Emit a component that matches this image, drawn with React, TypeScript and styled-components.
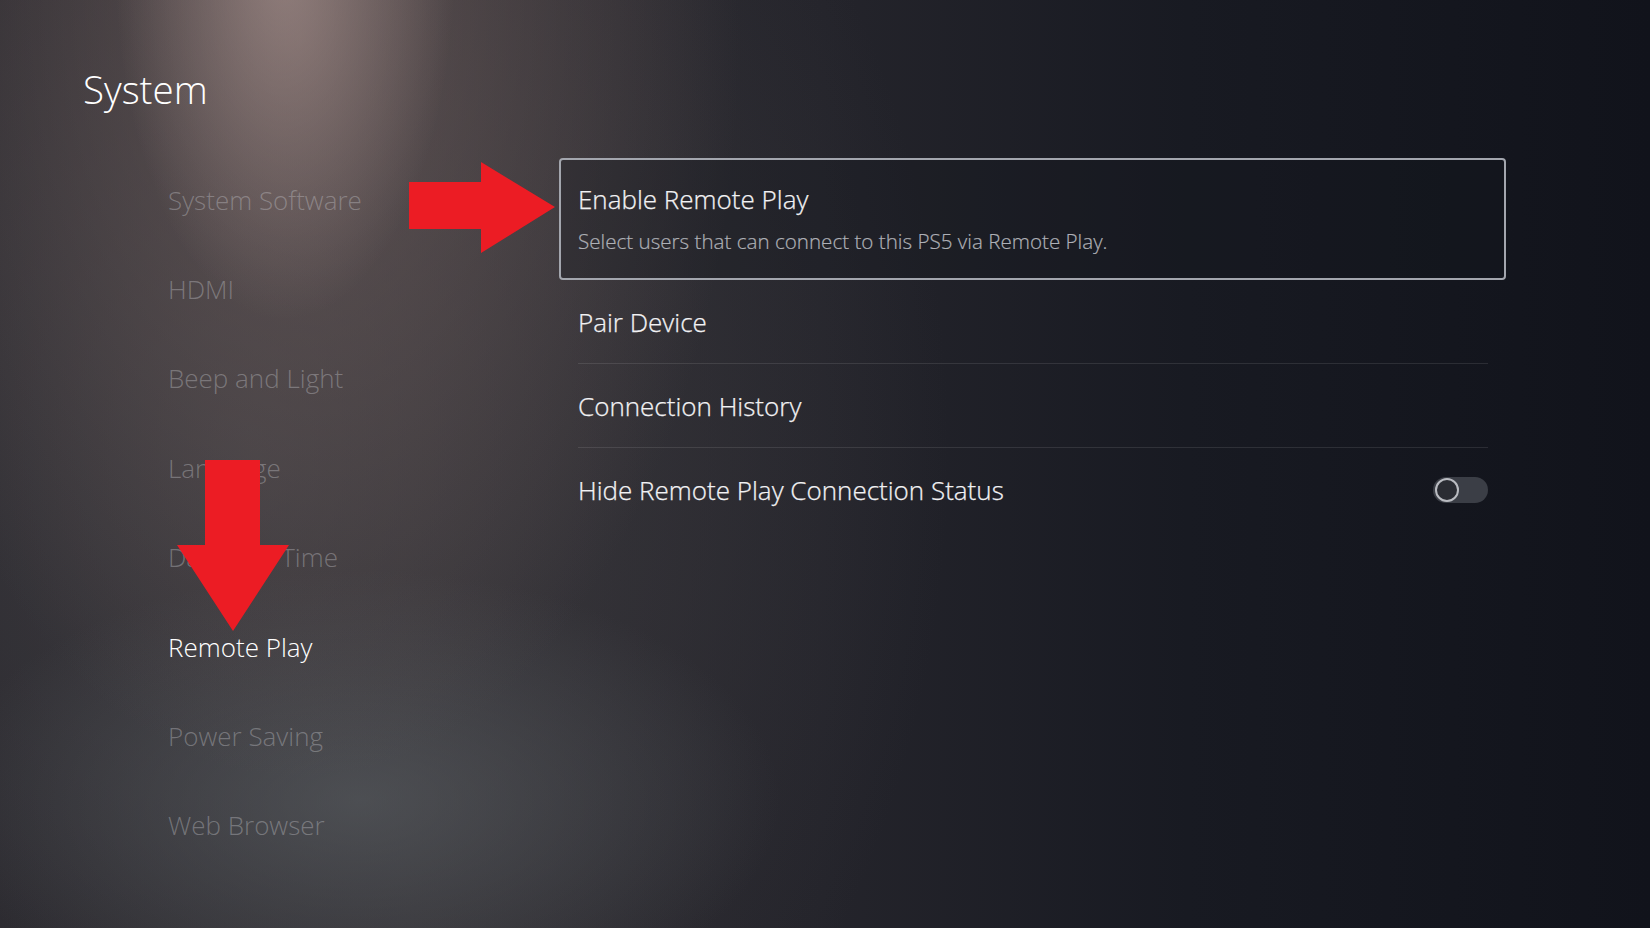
import React from "react";
import styled, { createGlobalStyle } from "styled-components";

const Global = createGlobalStyle`
  html, body { margin: 0; padding: 0; }
  body {
    width: 1650px;
    height: 928px;
    overflow: hidden;
    font-family: "Open Sans", "Noto Sans", sans-serif;
    background: #17181f;
  }
`;

const Page = styled.div`
  position: relative;
  width: 1650px;
  height: 928px;
  overflow: hidden;
  color: #f2f2f2;
  background:
    radial-gradient(ellipse 170px 360px at 285px -40px, rgba(190, 165, 160, 0.55), rgba(190, 165, 160, 0) 100%),
    radial-gradient(ellipse 440px 740px at 300px 40px, rgba(125, 105, 102, 0.55), rgba(125, 105, 102, 0) 100%),
    radial-gradient(ellipse 420px 230px at 360px 800px, rgba(95, 100, 104, 0.55), rgba(95, 100, 104, 0) 100%),
    radial-gradient(ellipse 700px 900px at 250px 450px, rgba(70, 68, 72, 0.7), rgba(70, 68, 72, 0) 100%),
    linear-gradient(90deg, #242329 0%, #2c2a2f 25%, #24242b 50%, #181a22 72%, #11131b 100%);
`;

const Header = styled.header`
  padding: 65px 0 0 83px;
  height: 48px;
`;

const Title = styled.h1`
  margin: 0;
  font-size: 38.5px;
  line-height: 48px;
  font-weight: 300;
  color: #ffffff;
`;

const Main = styled.main`
  display: flex;
  margin-top: 42px;
`;

const Sidebar = styled.nav`
  width: 391px;
  padding-left: 168px;
  display: flex;
  flex-direction: column;
`;

const MenuItem = styled.div<{ $active?: boolean }>`
  height: 89.4px;
  display: flex;
  align-items: center;
  font-size: 26px;
  font-weight: 300;
  color: ${(p) => (p.$active ? "#ffffff" : "rgba(200, 200, 205, 0.38)")};
`;

const Content = styled.section`
  width: 947px;
  display: flex;
  flex-direction: column;
  margin-top: 3px;
`;

const FocusCard = styled.div`
  border: 2px solid #a3a6ae;
  border-radius: 4px;
  padding: 22px 17px 23px;
  background: rgba(20, 22, 30, 0.3);
`;

const RowTitle = styled.div`
  font-size: 26px;
  line-height: 34px;
  font-weight: 300;
  color: #f2f2f4;
  -webkit-text-stroke: 0.25px #f2f2f4;
`;

const RowSub = styled.div`
  margin-top: 11px;
  font-size: 20.6px;
  line-height: 28px;
  font-weight: 300;
  color: #aeb0b6;
  -webkit-text-stroke: 0.2px #aeb0b6;
`;

const List = styled.div`
  display: flex;
  flex-direction: column;
  padding: 0 18px 0 19px;
`;

const Row = styled.div<{ $last?: boolean }>`
  height: 83px;
  display: flex;
  align-items: center;
  justify-content: space-between;
  border-bottom: ${(p) => (p.$last ? "none" : "1px solid rgba(255, 255, 255, 0.1)")};
`;

const Toggle = styled.div`
  width: 55px;
  height: 26px;
  border-radius: 13px;
  background: #3b3e46;
  display: flex;
  align-items: center;
  padding-left: 2px;
  box-sizing: border-box;
`;

const Knob = styled.div`
  width: 20px;
  height: 20px;
  border-radius: 50%;
  border: 2px solid #b9bbc1;
  background: #2a2c33;
`;

const Arrow = styled.svg`
  position: absolute;
  display: block;
`;

const menu = [
  "System Software",
  "HDMI",
  "Beep and Light",
  "Language",
  "Date and Time",
  "Remote Play",
  "Power Saving",
  "Web Browser",
];

export default function App() {
  return (
    <>
      <Global />
      <Page>
        <Header>
          <Title>System</Title>
        </Header>
        <Main>
          <Sidebar>
            {menu.map((m) => (
              <MenuItem key={m} $active={m === "Remote Play"}>
                {m}
              </MenuItem>
            ))}
          </Sidebar>
          <Content>
            <FocusCard>
              <RowTitle>Enable Remote Play</RowTitle>
              <RowSub>Select users that can connect to this PS5 via Remote Play.</RowSub>
            </FocusCard>
            <List>
              <Row>
                <RowTitle>Pair Device</RowTitle>
              </Row>
              <Row>
                <RowTitle>Connection History</RowTitle>
              </Row>
              <Row $last>
                <RowTitle>Hide Remote Play Connection Status</RowTitle>
                <Toggle>
                  <Knob />
                </Toggle>
              </Row>
            </List>
          </Content>
        </Main>
        <Arrow
          style={{ left: 409, top: 162 }}
          width="148"
          height="92"
          viewBox="0 0 148 92"
        >
          <polygon
            points="0,20 72,20 72,0 146,45 72,91 72,67 0,67"
            fill="#ec1c24"
          />
        </Arrow>
        <Arrow
          style={{ left: 177, top: 460 }}
          width="113"
          height="172"
          viewBox="0 0 113 172"
        >
          <polygon
            points="28,0 83,0 83,85 112,85 56,171 0,85 28,85"
            fill="#ec1c24"
          />
        </Arrow>
      </Page>
    </>
  );
}
